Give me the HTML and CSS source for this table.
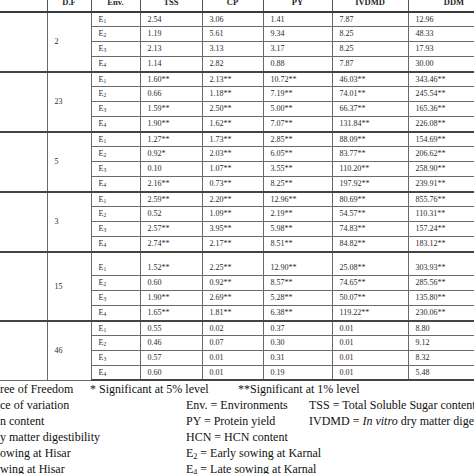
FILE: index.html
```html
<!DOCTYPE html>
<html>
<head>
<meta charset="utf-8">
<link rel="stylesheet" href="styles.css">
</head>
<body>
<div class="page">
<table class="data">
<colgroup>
<col class="c-sv"><col class="c-df"><col class="c-env"><col class="c-tss"><col class="c-cp"><col class="c-py"><col class="c-iv"><col class="c-ddm">
</colgroup>
<thead>
<tr><th class="sv"></th><th>D.F</th><th>Env.</th><th>TSS</th><th>CP</th><th>PY</th><th>IVDMD</th><th>DDM</th></tr>
</thead>
<tbody>
<tr class="gs"><td class="sv" rowspan="4"></td><td class="df" rowspan="4">2</td><td>E<sub>1</sub></td><td>2.54</td><td>3.06</td><td>1.41</td><td>7.87</td><td>12.96</td></tr>
<tr><td>E<sub>2</sub></td><td>1.19</td><td>5.61</td><td>9.34</td><td>8.25</td><td>48.33</td></tr>
<tr><td>E<sub>3</sub></td><td>2.13</td><td>3.13</td><td>3.17</td><td>8.25</td><td>17.93</td></tr>
<tr><td>E<sub>4</sub></td><td>1.14</td><td>2.82</td><td>0.88</td><td>7.87</td><td>30.00</td></tr>

<tr class="gs"><td class="sv" rowspan="4"></td><td class="df" rowspan="4">23</td><td>E<sub>1</sub></td><td>1.60**</td><td>2.13**</td><td>10.72**</td><td>46.03**</td><td>343.46**</td></tr>
<tr><td>E<sub>2</sub></td><td>0.66</td><td>1.18**</td><td>7.19**</td><td>74.01**</td><td>245.54**</td></tr>
<tr><td>E<sub>3</sub></td><td>1.59**</td><td>2.50**</td><td>5.00**</td><td>66.37**</td><td>165.36**</td></tr>
<tr><td>E<sub>4</sub></td><td>1.90**</td><td>1.62**</td><td>7.07**</td><td>131.84**</td><td>226.08**</td></tr>

<tr class="gs"><td class="sv" rowspan="4"></td><td class="df" rowspan="4">5</td><td>E<sub>1</sub></td><td>1.27**</td><td>1.73**</td><td>2.85**</td><td>88.09**</td><td>154.69**</td></tr>
<tr><td>E<sub>2</sub></td><td>0.92*</td><td>2.03**</td><td>6.05**</td><td>83.77**</td><td>206.62**</td></tr>
<tr><td>E<sub>3</sub></td><td>0.10</td><td>1.07**</td><td>3.55**</td><td>110.20**</td><td>258.90**</td></tr>
<tr><td>E<sub>4</sub></td><td>2.16**</td><td>0.73**</td><td>8.25**</td><td>197.92**</td><td>239.91**</td></tr>

<tr class="gs"><td class="sv" rowspan="4"></td><td class="df" rowspan="4">3</td><td>E<sub>1</sub></td><td>2.59**</td><td>2.20**</td><td>12.96**</td><td>80.69**</td><td>855.76**</td></tr>
<tr><td>E<sub>2</sub></td><td>0.52</td><td>1.09**</td><td>2.19**</td><td>54.57**</td><td>110.31**</td></tr>
<tr><td>E<sub>3</sub></td><td>2.57**</td><td>3.95**</td><td>5.98**</td><td>74.83**</td><td>157.24**</td></tr>
<tr><td>E<sub>4</sub></td><td>2.74**</td><td>2.17**</td><td>8.51**</td><td>84.82**</td><td>183.12**</td></tr>

<tr class="gs tall"><td class="sv" rowspan="4"></td><td class="df" rowspan="4">15</td><td>E<sub>1</sub></td><td>1.52**</td><td>2.25**</td><td>12.90**</td><td>25.08**</td><td>303.93**</td></tr>
<tr><td>E<sub>2</sub></td><td>0.60</td><td>0.92**</td><td>8.57**</td><td>74.65**</td><td>285.56**</td></tr>
<tr><td>E<sub>3</sub></td><td>1.90**</td><td>2.69**</td><td>5.28**</td><td>50.07**</td><td>135.80**</td></tr>
<tr><td>E<sub>4</sub></td><td>1.65**</td><td>1.81**</td><td>6.38**</td><td>119.22**</td><td>230.06**</td></tr>

<tr class="gs"><td class="sv" rowspan="4"></td><td class="df" rowspan="4">46</td><td>E<sub>1</sub></td><td>0.55</td><td>0.02</td><td>0.37</td><td>0.01</td><td>8.80</td></tr>
<tr><td>E<sub>2</sub></td><td>0.46</td><td>0.07</td><td>0.30</td><td>0.01</td><td>9.12</td></tr>
<tr><td>E<sub>3</sub></td><td>0.57</td><td>0.01</td><td>0.31</td><td>0.01</td><td>8.32</td></tr>
<tr class="last"><td>E<sub>4</sub></td><td>0.60</td><td>0.01</td><td>0.19</td><td>0.01</td><td>5.48</td></tr>
</tbody>
</table>

<div class="notes">
  <div class="line first">
    <span>ree of Freedom</span>
    <span>* Significant at 5% level</span>
    <span>**Significant at 1% level</span>
  </div>
  <div class="line">
    <span>ce of variation</span>
    <span>Env. = Environments</span>
    <span>TSS = Total Soluble Sugar content</span>
  </div>
  <div class="line">
    <span>n content</span>
    <span>PY = Protein yield</span>
    <span>IVDMD = <i>In vitro</i> dry matter digestibility</span>
  </div>
  <div class="line">
    <span>y matter digestibility</span>
    <span>HCN = HCN content</span>
    <span></span>
  </div>
  <div class="line">
    <span>owing at Hisar</span>
    <span>E<sub>2</sub> = Early sowing at Karnal</span>
    <span></span>
  </div>
  <div class="line">
    <span>wing at Hisar</span>
    <span>E<sub>4</sub> = Late sowing at Karnal</span>
    <span></span>
  </div>
</div>
</div>
</body>
</html>
```

FILE: styles.css
```css
html, body {
  margin: 0;
  padding: 0;
  background: #fff;
}
body {
  width: 474px;
  height: 474px;
  overflow: hidden;
  font-family: "Liberation Serif", "Times New Roman", serif;
  color: #1e1e1e;
}
.page {
  margin-top: -8px;
  width: 474px;
}
.data {
  border-collapse: collapse;
  table-layout: fixed;
  width: 500px;
  font-size: 8px;
  line-height: 10px;
}
.c-sv { width: 47px; }
.c-df { width: 44px; }
.c-env { width: 49px; }
.c-tss { width: 62px; }
.c-cp { width: 61px; }
.c-py { width: 69px; }
.c-iv { width: 76px; }
.c-ddm { width: 92px; }

.data th {
  height: 19px;
  padding: 0;
  font-weight: bold;
  font-size: 8.5px;
  text-align: center;
  vertical-align: middle;
  border-left: 1px solid #555;
  border-right: 1px solid #555;
  border-bottom: 2px solid #3a3a3a;
}
.data th.sv { border-left: none; }
.data td {
  height: 14px;
  padding: 0 0 0 7px;
  border: 1px solid #6a6a6a;
  white-space: nowrap;
  vertical-align: middle;
  color: #2a2a2a;
}
.data td.sv { border-left: none; }
.data tr.gs td { border-top: 2px solid #444; height: 13px; }
.data tr.tall td { height: 20px; vertical-align: bottom; padding-bottom: 2px; }
.data tr.gs td.sv, .data tr.gs td.df { vertical-align: middle; padding-bottom: 0; }
.data tr.last td { border-bottom: 2px solid #444; height: 13px; }
.data sub {
  font-size: 5.5px;
  vertical-align: -1px;
  line-height: 0;
}

.notes {
  font-size: 12px;
  line-height: 16px;
  color: #111;
  white-space: nowrap;
}
.line {
  display: grid;
  grid-template-columns: 186px 123px 1fr;
  overflow: hidden;
}
.line.first {
  grid-template-columns: 90px 148px 1fr;
}
.notes sub {
  font-size: 8px;
  vertical-align: -2px;
  line-height: 0;
}
```
